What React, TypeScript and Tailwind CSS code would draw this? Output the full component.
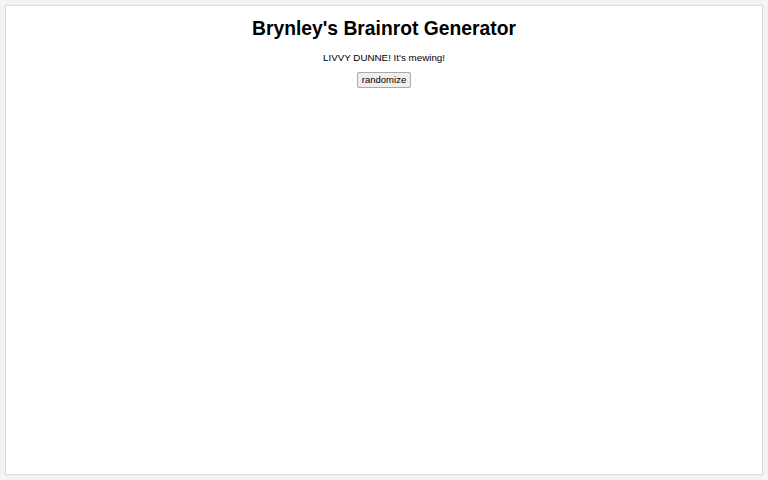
export default function App() {
  return (
    <div className="h-[480px] w-[768px] bg-[#f3f3f3] p-[5px] font-['Liberation_Sans',Arial,sans-serif]">
      <div className="flex h-[470px] flex-col items-center border border-[#dcdcdc] bg-white">
        <h1 className="mt-[11px] text-[19.3px] font-bold leading-[24px] text-black">
          Brynley's Brainrot Generator
        </h1>
        <p className="mt-[11px] text-[9.8px] leading-[12px] text-black">LIVVY DUNNE! It's mewing!</p>
        <button className="mt-[8px] rounded-[2px] border border-[#a9a9a9] bg-[#efefef] px-[4px] py-[1px] text-[9.5px] leading-[12px] text-black">
          randomize
        </button>
      </div>
    </div>
  );
}
